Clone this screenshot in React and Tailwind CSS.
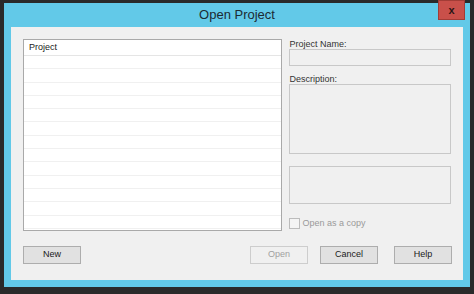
import React from 'react';

const rows = Array.from({ length: 13 });

function Btn({ children, disabled }) {
  return (
    <button
      disabled={disabled}
      className={
        disabled
          ? 'block w-[58px] h-[18px] border border-[#cdcdcd] bg-[#f0f0f0] text-[#a0a0a0] text-[9px]'
          : 'block w-[58px] h-[18px] border border-[#adadad] bg-[#e1e1e1] text-[#1a1a1a] text-[9px]'
      }
    >
      {children}
    </button>
  );
}

export default function App() {
  return (
    <div
      className="w-[474px] h-[294px] bg-[#2a2a2a] pt-[3px] pl-[4px] overflow-hidden"
      style={{ fontFamily: '"Liberation Sans", Arial, sans-serif' }}
    >
      <div className="relative w-[466px] h-[284px] bg-[#62c9e8] flex flex-col">
        {/* Title bar */}
        <div className="h-[24px] flex items-center justify-center text-[13px] text-[#1c2b33]">Open Project</div>
        <button className="absolute top-[-3px] right-[5px] w-[27px] h-[20px] bg-[#c9504a] border border-[#a23c36] flex items-center justify-center text-[#2a1414] text-[11px] font-bold leading-none">
          x
        </button>

        {/* Body */}
        <div className="mx-[7px] h-[253px] bg-[#f0f0f0] pt-[12px] px-[12px] flex flex-col">
          <div className="flex gap-[7px] items-start">
            {/* List */}
            <div className="w-[260px] h-[192px] border border-[#a9a9a9] bg-white flex flex-col overflow-hidden">
              <div className="h-[16px] shrink-0 border-b border-[#e5e5e5] flex items-center px-[5px] text-[9px] text-[#1a1a1a]">Project</div>
              {rows.map((_, i) => (
                <div key={i} className="h-[13.3px] shrink-0 border-b border-[#f0f0f0]" />
              ))}
            </div>

            {/* Right column */}
            <div className="w-[162px] flex flex-col text-[9px] text-[#333]">
              <div className="h-[9px] leading-[9px] mt-[1px]">Project Name:</div>
              <div className="h-[17px] border border-[#c8c8c8] bg-[#f0f0f0]" />
              <div className="mt-[9px] h-[9px] leading-[9px]">Description:</div>
              <div className="h-[70px] border border-[#c8c8c8] bg-[#f0f0f0]" />
              <div className="mt-[12px] h-[38px] border border-[#c8c8c8] bg-[#f0f0f0]" />
              <div className="mt-[14px] h-[11px] flex items-center gap-[2px] text-[#9a9a9a]">
                <div className="w-[11px] h-[11px] border border-[#bcbcbc] bg-[#f4f4f4]" />
                <span>Open as a copy</span>
              </div>
            </div>
          </div>

          {/* Buttons */}
          <div className="mt-[15px] flex items-center">
            <Btn>New</Btn>
            <div className="flex-1" />
            <div className="flex items-center gap-[12px] mr-[-1px]">
              <Btn disabled>Open</Btn>
              <Btn>Cancel</Btn>
              <div className="ml-[4px]">
                <Btn>Help</Btn>
              </div>
            </div>
          </div>
        </div>
      </div>
    </div>
  );
}
